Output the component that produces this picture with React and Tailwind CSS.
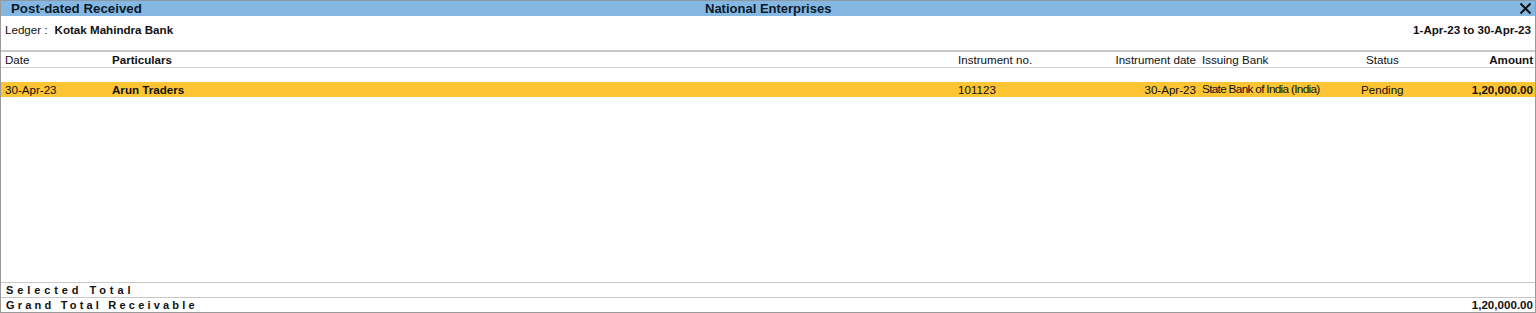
export default function App() {
  const font = { fontFamily: '"Liberation Sans", Arial, sans-serif' };
  return (
    <div className="w-[1536px] h-[313px] bg-white flex flex-col border-l border-r border-b border-[#9a9a9a] text-[11.6px] text-[#111]" style={font}>
      <div className="h-[16px] flex items-center bg-[#84b8e3] border-t border-[#8a9aa8] relative shrink-0">
        <span className="pl-[10px] font-bold text-[13.3px] text-[#0d1a2a]">Post-dated Received</span>
        <span className="absolute left-[704px] font-bold text-[13px] text-[#0d1a2a]">National Enterprises</span>
        <span className="ml-auto pr-[3px] text-[#111]">
          <svg width="13" height="13" viewBox="0 0 13 13"><path d="M1.5 1.5 L11.5 11.5 M11.5 1.5 L1.5 11.5" stroke="#111" strokeWidth="2"/></svg>
        </span>
      </div>
      <div className="h-[27px] flex items-center px-[4px] shrink-0">
        <span>Ledger :</span>
        <span className="font-bold ml-[7px]">Kotak Mahindra Bank</span>
        <span className="ml-auto font-bold">1-Apr-23 to 30-Apr-23</span>
      </div>
      <div className="h-[9px] border-b-2 border-[#c8c8c8] shrink-0" />
      <div className="h-[16px] flex items-center border-b border-[#cfcfcf] shrink-0 relative">
        <span className="absolute left-[4px]">Date</span>
        <span className="absolute left-[111px] font-bold">Particulars</span>
        <span className="absolute left-[957px]">Instrument no.</span>
        <span className="absolute right-[339px]">Instrument date</span>
        <span className="absolute left-[1201px]">Issuing Bank</span>
        <span className="absolute left-[1365px]">Status</span>
        <span className="absolute right-[2px] font-bold">Amount</span>
      </div>
      <div className="h-[14px] shrink-0" />
      <div className="h-[15px] flex items-center bg-[#fdc433] shrink-0 relative">
        <span className="absolute left-[4px]">30-Apr-23</span>
        <span className="absolute left-[111px] font-bold">Arun Traders</span>
        <span className="absolute left-[957px]">101123</span>
        <span className="absolute right-[339px]">30-Apr-23</span>
        <span className="absolute left-[1201px] tracking-[-0.7px] text-[11.8px]">State Bank of India (India)</span>
        <span className="absolute left-[1360px]">Pending</span>
        <span className="absolute right-[2px] font-bold">1,20,000.00</span>
      </div>
      <div className="flex-1" />
      <div className="h-[15px] flex items-center border-t border-[#c8c8c8] shrink-0 px-[5px]">
        <span className="font-bold text-[11px] tracking-[3.9px]">Selected Total</span>
      </div>
      <div className="h-[15px] flex items-center border-t border-[#c8c8c8] shrink-0 px-[5px]">
        <span className="font-bold text-[11px] tracking-[3.2px]">Grand Total Receivable</span>
        <span className="ml-auto font-bold mr-[-3px]">1,20,000.00</span>
      </div>
    </div>
  );
}
